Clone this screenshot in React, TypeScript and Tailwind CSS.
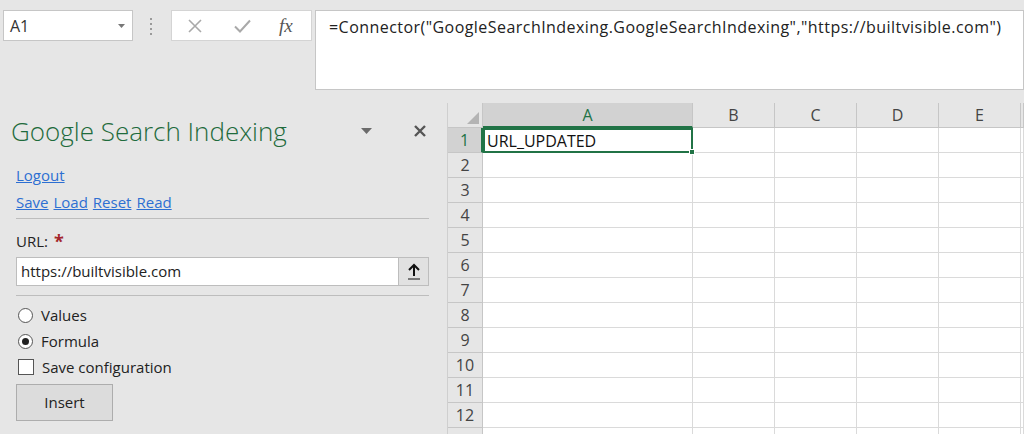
import React from "react"

const ui = { fontFamily: '"Open Sans", "Noto Sans", sans-serif' }
const cal = { fontFamily: '"Open Sans", "Liberation Sans", sans-serif' }

const cols = ["A", "B", "C", "D", "E", ""]
const rows = [1, 2, 3, 4, 5, 6, 7, 8, 9, 10, 11, 12, 13]

function TopBar() {
  return (
    <div className="flex h-[103px] items-start pt-[10px]">
      {/* name box */}
      <div className="ml-[3px] flex h-[31px] w-[130px] items-center justify-between border border-[#c6c6c6] bg-white pl-[6px] pr-[7px]">
        <span className="text-[16px] text-[#333]" style={ui}>A1</span>
        <svg width="7" height="4" viewBox="0 0 7 4"><path d="M0 0h7L3.5 4z" fill="#777" /></svg>
      </div>
      {/* grip */}
      <div className="ml-[17px] mt-[8px] flex w-[3px] flex-col gap-[3px]">
        <span className="h-[2px] w-[2px] bg-[#9a9a9a]" />
        <span className="h-[2px] w-[2px] bg-[#9a9a9a]" />
        <span className="h-[2px] w-[2px] bg-[#9a9a9a]" />
        <span className="h-[2px] w-[2px] bg-[#9a9a9a]" />
      </div>
      {/* formula buttons */}
      <div className="ml-[18px] flex h-[31px] w-[141px] items-center border border-[#d4d4d4] bg-white">
        <svg className="ml-[15px]" width="16" height="16" viewBox="0 0 16 16">
          <path d="M2 2l12 12M14 2L2 14" stroke="#a9a9a9" strokeWidth="1.6" />
        </svg>
        <svg className="ml-[31px]" width="17" height="14" viewBox="0 0 17 14">
          <path d="M1 7.5l5 5L16 1.5" stroke="#a9a9a9" strokeWidth="2" fill="none" />
        </svg>
        <span className="ml-[28px] text-[19px] italic leading-none text-[#555]" style={{ fontFamily: '"Liberation Serif", serif' }}>fx</span>
      </div>
      {/* formula bar */}
      <div className="ml-[3px] h-[80px] flex-1 border border-[#c6c6c6] bg-white pl-[13px] pt-[4px]">
        <span className="text-[16px] tracking-[0.45px] text-[#222]" style={cal}>
          =Connector("GoogleSearchIndexing.GoogleSearchIndexing","https://builtvisible.com")
        </span>
      </div>
    </div>
  )
}

function Radio({ checked, label }: { checked?: boolean; label: string }) {
  return (
    <div className="flex h-[26px] items-center">
      <span className="ml-[18px] flex h-[15px] w-[15px] items-center justify-center rounded-full border border-[#555] bg-white">
        {checked && <span className="h-[7px] w-[7px] rounded-full bg-[#222]" />}
      </span>
      <span className="ml-[8px] text-[15px] text-[#222]">{label}</span>
    </div>
  )
}

function TaskPane() {
  return (
    <div className="flex w-[448px] shrink-0 flex-col border-r border-[#cfcfcf]" style={ui}>
      <div className="mt-[12px] flex h-[32px] items-center">
        <h1 className="ml-[11px] text-[26px] font-light text-[#1e6b3c]">Google Search Indexing</h1>
        <svg className="ml-auto" width="11" height="6" viewBox="0 0 11 6"><path d="M0 0h11L5.5 6z" fill="#6b6b6b" /></svg>
        <svg className="ml-[42px] mr-[21px]" width="12" height="12" viewBox="0 0 12 12">
          <path d="M1 1l10 10M11 1L1 11" stroke="#555" strokeWidth="2.4" />
        </svg>
      </div>
      <div className="ml-[16px] mt-[18px] flex h-[20px] items-center">
        <a className="text-[15px] text-[#2d6fd2] underline">Logout</a>
      </div>
      <div className="ml-[16px] mt-[7px] flex h-[20px] items-center gap-[5px] text-[15px] text-[#2d6fd2]">
        <a className="underline">Save</a>
        <a className="underline">Load</a>
        <a className="underline">Reset</a>
        <a className="underline">Read</a>
      </div>
      <div className="ml-[16px] mt-[6px] h-px w-[413px] bg-[#bdbdbd]" />
      <div className="ml-[16px] mt-[12px] flex h-[20px] items-center text-[15px] text-[#222]">
        URL: <span className="ml-[6px] text-[18px] font-bold text-[#a4262c]">*</span>
      </div>
      <div className="ml-[16px] mt-[6px] flex h-[29px] w-[413px] items-stretch border border-[#bdbdbd] bg-white">
        <span className="flex flex-1 items-center pl-[4px] text-[15px] text-[#222]">https://builtvisible.com</span>
        <span className="flex w-[30px] items-center justify-center border-l border-[#bdbdbd] bg-[#e1e1e1]">
          <svg width="14" height="17" viewBox="0 0 14 17">
            <path d="M7 13V2M2 7l5-5 5 5" stroke="#111" strokeWidth="2" fill="none" />
            <path d="M1 16h12" stroke="#111" strokeWidth="1" />
          </svg>
        </span>
      </div>
      <div className="ml-[16px] mt-[9px] h-px w-[413px] bg-[#bdbdbd]" />
      <div className="mt-[6px]">
        <Radio label="Values" />
        <Radio checked label="Formula" />
        <div className="flex h-[26px] items-center">
          <span className="ml-[18px] h-[16px] w-[16px] border border-[#555] bg-white" />
          <span className="ml-[8px] text-[15px] text-[#222]">Save configuration</span>
        </div>
      </div>
      <button className="ml-[16px] mt-[4px] h-[37px] w-[97px] border border-[#adadad] bg-[#dcdcdc] text-[15px] text-[#222]">
        Insert
      </button>
    </div>
  )
}

function Grid() {
  return (
    <div className="flex-1 overflow-hidden" style={cal}>
      <div className="grid grid-cols-[35px_210px_82px_82px_82px_82px_1fr]">
        {/* header row */}
        <div className="relative h-[25px] border-b border-r border-[#c6c6c6] bg-[#e6e6e6]">
          <svg className="absolute bottom-[3px] right-[3px]" width="12" height="12" viewBox="0 0 12 12"><path d="M12 0v12H0z" fill="#b4b4b4" /></svg>
        </div>
        {cols.map((c, i) => (
          <div
            key={c + i}
            className={
              i === 0
                ? "flex h-[25px] items-center justify-center border-b-2 border-r border-b-[#217346] border-r-[#c6c6c6] bg-[#d2d2d2] text-[16px] text-[#217346]"
                : "flex h-[25px] items-center justify-center border-b border-r border-[#c6c6c6] bg-[#e6e6e6] text-[16px] text-[#444]"
            }
          >
            {c}
          </div>
        ))}
        {rows.map((r) => (
          <React.Fragment key={r}>
            <div
              className={
                r === 1
                  ? "flex h-[25px] items-center justify-center border-b border-r-2 border-b-[#c6c6c6] border-r-[#217346] bg-[#d2d2d2] text-[16px] text-[#217346]"
                  : "flex h-[25px] items-center justify-center border-b border-r border-[#c6c6c6] bg-[#e6e6e6] text-[16px] text-[#444]"
              }
            >
              {r}
            </div>
            {cols.map((c, i) =>
              r === 1 && i === 0 ? (
                <div key={c + i} className="relative flex h-[25px] items-center border-2 border-[#217346] bg-white pl-[2px] text-[16px] text-[#111]">
                  URL_UPDATED
                  <span className="absolute -bottom-[4px] -right-[4px] h-[6px] w-[6px] border border-white bg-[#217346]" />
                </div>
              ) : (
                <div key={c + i} className="h-[25px] border-b border-r border-[#dadada] bg-white" />
              )
            )}
          </React.Fragment>
        ))}
      </div>
    </div>
  )
}

export default function App() {
  return (
    <div className="flex h-[434px] w-[1024px] flex-col overflow-hidden bg-[#e6e6e6]">
      <TopBar />
      <div className="flex flex-1 overflow-hidden">
        <TaskPane />
        <Grid />
      </div>
    </div>
  )
}
